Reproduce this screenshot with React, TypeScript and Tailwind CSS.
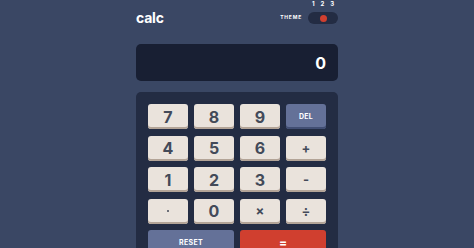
import React from "react";

const Key = ({ label, kind = "num", wide = false, small = false }: { label: React.ReactNode; kind?: "num" | "blue" | "red"; wide?: boolean; small?: boolean }) => {
  const base = "h-[25px] rounded-[3px] flex items-center justify-center font-bold leading-none";
  const cls =
    kind === "num"
      ? `bg-[#eae3dc] text-[#434a59] ${small ? "text-[13px]" : "text-[16px]"} shadow-[inset_0_-2px_0_#b3a497]`
      : kind === "blue"
      ? "bg-[#647198] text-white text-[7px] tracking-[0.3px] shadow-[inset_0_-2px_0_#414e73]"
      : "bg-[#d03f2f] text-white text-[12px] shadow-[inset_0_-2px_0_#93261a]";
  return <div className={`${base} ${cls} ${wide ? "col-span-2" : ""}`}>{label}</div>;
};

export default function App() {
  return (
    <div className="w-full h-[248px] overflow-hidden bg-[#3a4764]" style={{ fontFamily: "Inter, 'Open Sans', sans-serif" }}>
      <div className="w-[202px] mx-auto">
        <div className="flex justify-between items-start h-[44px]">
          <div className="pt-[9px] text-white text-[14px] font-bold leading-[18px] tracking-[-0.2px]">calc</div>
          <div className="flex items-end gap-[6px] pt-0">
            <div className="text-white text-[5px] font-bold tracking-[0.8px] leading-none mb-[4px]">THEME</div>
            <div className="flex flex-col items-center">
              <div className="flex w-[30px] justify-between px-[4px] text-white text-[6px] font-bold leading-[7px] h-[7px]">
                <span>1</span>
                <span>2</span>
                <span>3</span>
              </div>
              <div className="mt-[5px] w-[30px] h-[12px] rounded-full bg-[#232c43] flex items-center pl-[12px]">
                <div className="w-[7px] h-[7px] rounded-full bg-[#d03f2f]" />
              </div>
            </div>
          </div>
        </div>
        <div className="h-[37px] rounded-[5px] bg-[#181f33] flex items-center justify-end pr-[12px] text-white text-[16px] font-bold">
          0
        </div>
        <div className="mt-[11px] rounded-[5px] bg-[#232c43] pt-[12px] px-[12px] pb-[12px] grid grid-cols-4 gap-x-[6px] gap-y-[6.5px]">
          <Key label="7" />
          <Key label="8" />
          <Key label="9" />
          <Key label="DEL" kind="blue" />
          <Key label="4" />
          <Key label="5" />
          <Key label="6" />
          <Key label="+" small />
          <Key label="1" />
          <Key label="2" />
          <Key label="3" />
          <Key label="-" small />
          <Key label={<span className="block w-[2px] h-[2px] rounded-full bg-[#434a59]" />} />
          <Key label="0" />
          <Key label="×" small />
          <Key label="÷" small />
          <Key label="RESET" kind="blue" wide />
          <Key label="=" kind="red" wide />
        </div>
      </div>
    </div>
  );
}
